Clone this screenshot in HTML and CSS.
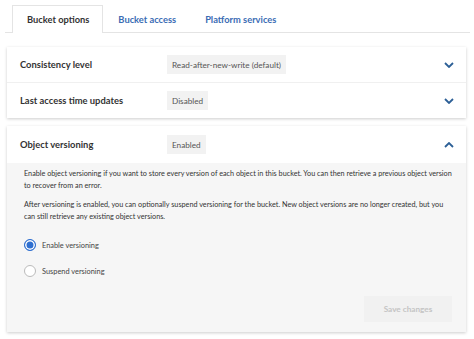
FILE: index.html
```html
<!DOCTYPE html>
<html lang="en">
<head>
  <meta charset="UTF-8">
  <title>Bucket options</title>
  <link rel="stylesheet" href="styles.css">
</head>
<body>
  <div class="tabs">
    <div class="tab active">Bucket options</div>
    <div class="tab">Bucket access</div>
    <div class="tab">Platform services</div>
  </div>

  <div class="card">
    <div class="row">
      <div class="label">Consistency level</div>
      <div class="badge">Read-after-new-write (default)</div>
      <svg class="chevron" viewBox="0 0 10 6"><path d="M1 1 L5 5 L9 1"/></svg>
    </div>
    <div class="row">
      <div class="label">Last access time updates</div>
      <div class="badge">Disabled</div>
      <svg class="chevron" viewBox="0 0 10 6"><path d="M1 1 L5 5 L9 1"/></svg>
    </div>
  </div>

  <div class="card">
    <div class="row open">
      <div class="label">Object versioning</div>
      <div class="badge">Enabled</div>
      <svg class="chevron" viewBox="0 0 10 6"><path d="M1 5 L5 1 L9 5"/></svg>
    </div>
    <div class="panel">
      <p>Enable object versioning if you want to store every version of each object in this bucket. You can then retrieve a previous object version to recover from an error.</p>
      <p>After versioning is enabled, you can optionally suspend versioning for the bucket. New object versions are no longer created, but you can still retrieve any existing object versions.</p>

      <div class="options">
        <label class="radio"><span class="dot checked"></span>Enable versioning</label>
        <label class="radio"><span class="dot"></span>Suspend versioning</label>
      </div>

      <div class="actions">
        <button class="save" disabled>Save changes</button>
      </div>
    </div>
  </div>
</body>
</html>
```

FILE: styles.css
```css
* {
  box-sizing: border-box;
}

body {
  margin: 0;
  padding: 5px 8px 0 7px;
  font-family: Lato, "Liberation Sans", sans-serif;
  background-color: #fff;
  color: #333;
}

.tabs {
  display: flex;
  margin: 0 -4px 14px -2px;
  padding-left: 7px;
  border-bottom: 1px solid #e4e4e4;
}

.tab {
  height: 27px;
  padding: 0 13px 0 14px;
  display: flex;
  align-items: center;
  font-size: 9.3px;
  font-weight: bold;
  color: #3a6cb4;
  border: 1px solid transparent;
  border-bottom: none;
}

.tab.active {
  color: #333;
  background-color: #fff;
  border-color: #e4e4e4;
  margin-bottom: -1px;
  height: 28px;
}

.card {
  background-color: #fff;
  box-shadow: 0 1px 3px rgba(0, 0, 0, 0.2);
  margin-bottom: 8px;
}

.row {
  height: 35px;
  display: flex;
  align-items: center;
  padding: 0 12px 0 13px;
}

.row + .row {
  border-top: 1px solid #f0f0f0;
  height: 36px;
}

.row.open {
  height: 37px;
}

.label {
  width: 147px;
  font-size: 9.4px;
  font-weight: bold;
  color: #333;
}

.badge {
  background-color: #f2f2f2;
  color: #555;
  font-size: 8.2px;
  padding: 0 5px;
  height: 19px;
  display: flex;
  align-items: center;
}

.chevron {
  margin-left: auto;
  width: 10px;
  height: 6px;
  fill: none;
  stroke: #2c5f96;
  stroke-width: 1.8;
}

.panel {
  background-color: #f6f6f6;
  padding: 5px 14px 10px 17px;
  font-size: 7.25px;
  color: #333;
}

.panel p {
  margin: 0 0 7px;
  line-height: 12px;
}

.options {
  display: flex;
  flex-direction: column;
  gap: 14px;
  margin-top: 16px;
}

.radio {
  display: flex;
  align-items: center;
  gap: 6px;
  font-size: 7.4px;
  color: #444;
}

.dot {
  width: 12px;
  height: 12px;
  border-radius: 50%;
  border: 1px solid #bbb;
  background-color: #fff;
}

.dot.checked {
  border: 1px solid #2f6fd0;
  background-color: #2f6fd0;
  box-shadow: inset 0 0 0 1.5px #fff;
}

.actions {
  display: flex;
  justify-content: flex-end;
  margin-top: 19px;
}

.save {
  width: 88px;
  height: 26px;
  border: none;
  background-color: #f1f1f1;
  color: #c4c4c4;
  font-family: inherit;
  font-size: 8.2px;
  font-weight: bold;
}
```
